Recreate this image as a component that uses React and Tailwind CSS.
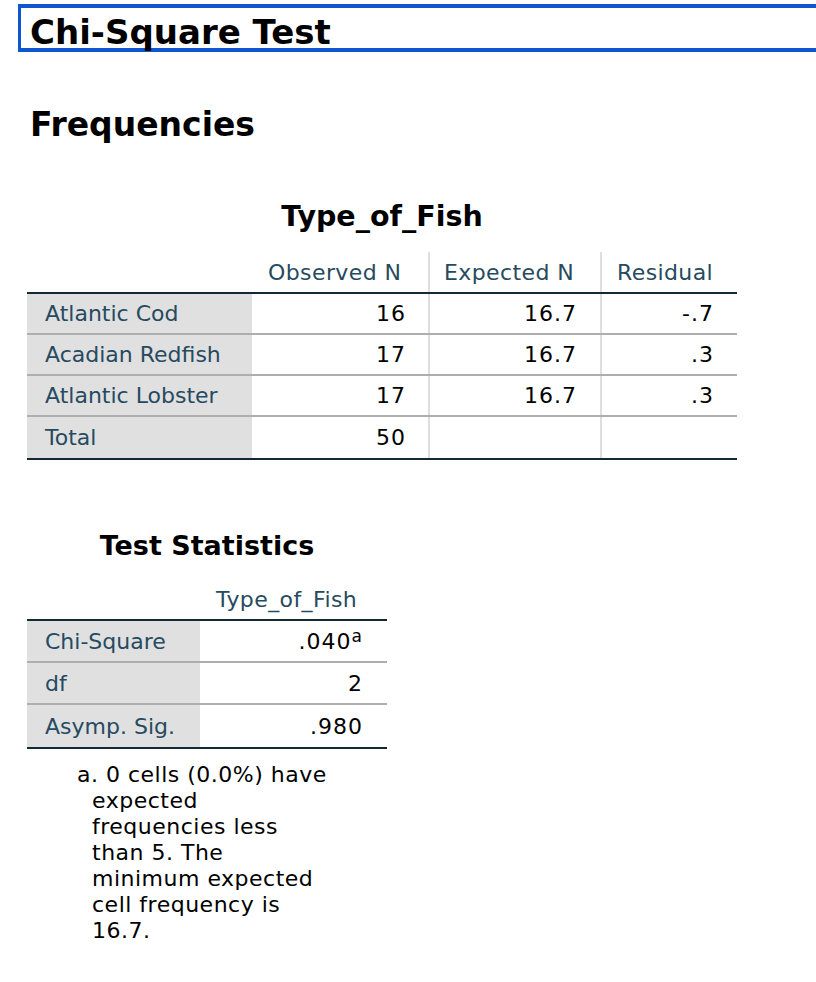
const font = { fontFamily: '"DejaVu Sans", Verdana, sans-serif' }

const freqRows = [
  { label: 'Atlantic Cod', obs: '16', exp: '16.7', res: '-.7' },
  { label: 'Acadian Redfish', obs: '17', exp: '16.7', res: '.3' },
  { label: 'Atlantic Lobster', obs: '17', exp: '16.7', res: '.3' },
  { label: 'Total', obs: '50', exp: '', res: '' },
]

const statRows = [
  { label: 'Chi-Square', value: '.040', sup: 'a' },
  { label: 'df', value: '2' },
  { label: 'Asymp. Sig.', value: '.980' },
]

function FrequencyTable() {
  return (
    <div className="ml-[27px] w-[710px]">
      <div className="text-center text-[28.5px] font-bold leading-[34px] text-black mt-[55px]">Type_of_Fish</div>
      <div className="mt-[18px] grid grid-cols-[225px_176px_172px_137px] text-[22px] text-[#264a60]">
        <div className="h-[40px]" />
        <div className="flex h-[40px] items-center pl-[16px] tracking-[0.4px]">Observed N</div>
        <div className="flex h-[40px] items-center border-l-2 border-[#dedede] pl-[14px] tracking-[0.4px]">Expected N</div>
        <div className="flex h-[40px] items-center border-l-2 border-[#dedede] pl-[15px] tracking-[0.4px]">Residual</div>
      </div>
      <div className="border-y-2 border-[#152935]">
        {freqRows.map((r, i) => (
          <div
            key={r.label}
            className={`grid h-[41px] grid-cols-[225px_176px_172px_137px] text-[22px] ${
              i < freqRows.length - 1 ? 'border-b-2 border-[#aeaeae]' : ''
            }`}
          >
            <div className="flex items-center bg-[#e0e0e0] pl-[18px] text-[#264a60]">{r.label}</div>
            <div className="flex items-center justify-end pr-[22px] text-black tracking-[1px]">{r.obs}</div>
            <div className="flex items-center justify-end border-l-2 border-[#dedede] pr-[23px] text-black tracking-[1px]">{r.exp}</div>
            <div className="flex items-center justify-end border-l-2 border-[#dedede] pr-[23px] text-black tracking-[1px]">{r.res}</div>
          </div>
        ))}
      </div>
    </div>
  )
}

function StatsTable() {
  return (
    <div className="ml-[27px] w-[360px]">
      <div className="mt-[69px] text-center text-[27px] font-bold leading-[34px] text-black">Test Statistics</div>
      <div className="mt-[16px] grid grid-cols-[173px_187px] text-[22px] text-[#264a60]">
        <div className="h-[40px]" />
        <div className="flex h-[40px] items-center pl-[16px] tracking-[0.4px]">Type_of_Fish</div>
      </div>
      <div className="border-y-2 border-[#152935]">
        {statRows.map((r, i) => (
          <div
            key={r.label}
            className={`grid h-[42px] grid-cols-[173px_187px] text-[22px] ${
              i < statRows.length - 1 ? 'border-b-2 border-[#aeaeae]' : ''
            }`}
          >
            <div className="flex items-center bg-[#e0e0e0] pl-[18px] text-[#264a60]">{r.label}</div>
            <div className="flex items-center justify-end pr-[24px] text-black tracking-[1px]">
              {r.value}
              {r.sup && <sup className="relative -top-[5px] text-[17px]">{r.sup}</sup>}
            </div>
          </div>
        ))}
      </div>
      <p className="mt-[13px] pl-[65px] -indent-[15px] text-[22px] leading-[26px] tracking-[0.5px] text-black">
        a. 0 cells (0.0%) have
        <br />
        expected
        <br />
        frequencies less
        <br />
        than 5. The
        <br />
        minimum expected
        <br />
        cell frequency is
        <br />
        16.7.
      </p>
    </div>
  )
}

export default function App() {
  return (
    <div className="min-h-[982px] w-[816px] overflow-hidden bg-white pt-[4px]" style={font}>
      <div className="ml-[18px] flex h-[48px] w-[830px] items-center border-y-4 border-l-[3px] border-[#0d56d0] pl-[9px] pt-[8px]">
        <h1 className="text-[34px] font-bold leading-none text-black">Chi-Square Test</h1>
      </div>
      <h2 className="mt-[53px] pl-[30px] text-[33px] font-bold leading-[40px] text-black">Frequencies</h2>
      <FrequencyTable />
      <StatsTable />
    </div>
  )
}
